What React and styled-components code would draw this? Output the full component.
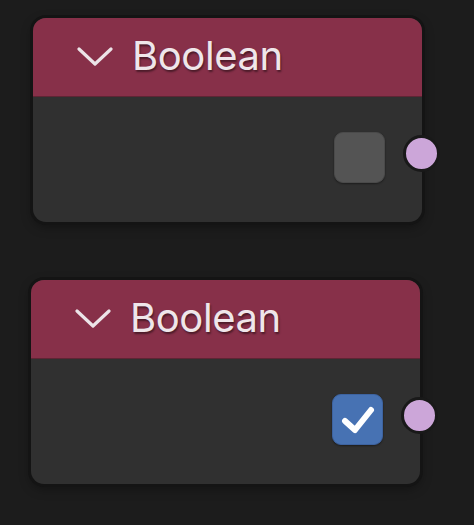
import styled, { createGlobalStyle } from "styled-components";

const Global = createGlobalStyle`
  html, body {
    margin: 0;
    background: #1c1c1c;
  }
`;

const Canvas = styled.div`
  width: 474px;
  height: 525px;
  background-color: #1c1c1c;
  padding-top: 18px;
  box-sizing: border-box;
  display: flex;
  flex-direction: column;
  gap: 58px;
  font-family: Inter, "DejaVu Sans", sans-serif;
`;

const Node = styled.div`
  position: relative;
  width: 389px;
  height: 204px;
  margin-left: ${(p) => p.$left}px;
  border-radius: 13px;
  background-color: #303030;
  box-shadow: 0 0 0 3px #141414, 0 4px 12px rgba(0, 0, 0, 0.4);
  display: flex;
  flex-direction: column;
`;

const Header = styled.div`
  height: 79px;
  background-color: #873049;
  border-radius: 13px 13px 0 0;
  border-bottom: 1px solid #5e2534;
  box-sizing: border-box;
  display: flex;
  align-items: center;
  padding-left: 44px;
  gap: 19px;
`;

const Title = styled.span`
  color: #efe6ea;
  font-size: 40px;
  font-weight: 400;
  letter-spacing: -0.4px;
  text-shadow: 1px 2px 2px rgba(0, 0, 0, 0.45);
  margin-top: -4px;
`;

const Body = styled.div`
  flex: 1;
  display: flex;
  align-items: center;
  justify-content: flex-end;
  padding-right: 37px;
  padding-bottom: 4px;
`;

const Check = styled.div`
  width: 51px;
  height: 51px;
  box-sizing: border-box;
  border-radius: 9px;
  background-color: ${(p) => (p.$on ? "#4772b3" : "#545454")};
  border: 1px solid ${(p) => (p.$on ? "#3d63a0" : "#4a4a4a")};
  box-shadow: 0 1px 2px rgba(0, 0, 0, 0.4);
  display: flex;
  align-items: center;
  justify-content: center;
`;

const Socket = styled.div`
  position: absolute;
  right: -18px;
  top: ${(p) => p.$top}px;
  width: 37px;
  height: 37px;
  box-sizing: border-box;
  border-radius: 50%;
  background-color: #cca6d9;
  border: 3px solid #191919;
`;

const Chevron = () => (
  <svg width="36" height="22" viewBox="0 0 36 22">
    <polyline
      points="2,3 18,18 34,3"
      fill="none"
      stroke="#ece4e8"
      strokeWidth="3.2"
      strokeLinecap="round"
      strokeLinejoin="round"
    />
  </svg>
);

const Tick = () => (
  <svg width="34" height="30" viewBox="0 0 34 30">
    <polyline
      points="4,16 14,25 30,5"
      fill="none"
      stroke="#ffffff"
      strokeWidth="6"
      strokeLinecap="round"
      strokeLinejoin="round"
    />
  </svg>
);

const BooleanNode = ({ on, left, socketTop }) => (
  <Node $left={left}>
    <Header>
      <Chevron />
      <Title>Boolean</Title>
    </Header>
    <Body>
      <Check $on={on}>{on && <Tick />}</Check>
    </Body>
    <Socket $top={socketTop} />
  </Node>
);

export default function App() {
  return (
    <>
      <Global />
      <Canvas>
        <BooleanNode left={33} socketTop={117} on={false} />
        <BooleanNode left={31} socketTop={117} on={true} />
      </Canvas>
    </>
  );
}
